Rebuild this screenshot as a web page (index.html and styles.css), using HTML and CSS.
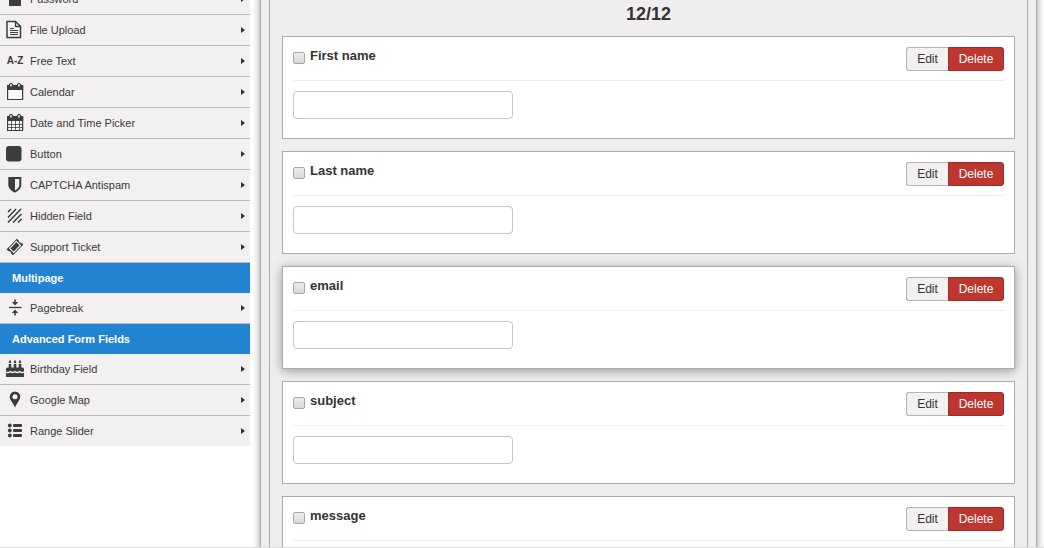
FILE: index.html
```
<!DOCTYPE html>
<html lang="en">
<head>
<meta charset="utf-8">
<title>Form builder</title>
<link rel="stylesheet" href="styles.css">
</head>
<body>
<div class="app">
  <nav class="sidebar" aria-label="Form fields">
    <ul class="field-list">
      <li><a class="field" href="#"><svg class="icon" viewBox="0 0 20 20"><path d="M4 8h12v8.500q0 .5-1 .5H5q-1 0-1-.5z" fill="#3d3d3d"/></svg><span>Password</span></a></li>
      <li><a class="field" href="#"><svg class="icon" viewBox="0 0 20 20"><path d="M2 1.500h8.500l5 5V17.500H2z" fill="#f8f7f7" stroke="#3d3d3d" stroke-width="1.500"/><path d="M10.500 1.500v5h5" fill="none" stroke="#3d3d3d" stroke-width="1.300"/><path d="M5 8.500h4M5 10.500h8M5 12.500h8M5 14.500h8" stroke="#3d3d3d"/></svg><span>File Upload</span></a></li>
      <li><a class="field" href="#"><span class="icon icon-text">A-Z</span><span>Free Text</span></a></li>
      <li><a class="field" href="#"><svg class="icon" viewBox="0 0 20 20"><path d="M2.600 4h15v13.500h-15z" fill="#fbfafa" stroke="#3d3d3d" stroke-width="1.200"/><path d="M2 3h16.200v5H2z" fill="#3d3d3d"/><path d="M4.500 5V2.500q1.500-2.500 3 0V5zM12.500 5V2.500q1.500-2.500 3 0V5z" fill="#d9d8d8" stroke="#3d3d3d" stroke-width="1.200"/></svg><span>Calendar</span></a></li>
      <li><a class="field" href="#"><svg class="icon" viewBox="0 0 20 20"><path d="M2.600 4h15v13.500h-15z" fill="#fbfafa" stroke="#3d3d3d" stroke-width="1.200"/><path d="M2 3h16.200v5H2z" fill="#3d3d3d"/><path d="M6.500 8v10M10.500 8v10M14.500 8v10M3 11.500h14M3 14.500h14" stroke="#3d3d3d" stroke-width=".8"/><path d="M4.500 5V2.500q1.500-2.500 3 0V5zM12.500 5V2.500q1.500-2.500 3 0V5z" fill="#d9d8d8" stroke="#3d3d3d" stroke-width="1.200"/></svg><span>Date and Time Picker</span></a></li>
      <li><a class="field" href="#"><svg class="icon" viewBox="0 0 20 20"><rect x="1" y="2" width="15.500" height="15.500" rx="3" fill="#3d3d3d"/></svg><span>Button</span></a></li>
      <li><a class="field" href="#"><svg class="icon" viewBox="0 0 20 20"><path d="M3.300 2h13v8q0 4.500-6.500 7.800Q3.300 14.500 3.300 10z" fill="#3d3d3d"/><path d="M10 4h4.300v6q0 3-4.300 5.400z" fill="#f2f0f1"/></svg><span>CAPTCHA Antispam</span></a></li>
      <li><a class="field" href="#"><svg class="icon" viewBox="0 0 20 20"><path d="M3 6l3-3M3 11.500L11 3M3 16.500L16 3M8 16.500l8.500-8.500M13 16.500l3.500-3.500" stroke="#3d3d3d" stroke-width="1.500"/></svg><span>Hidden Field</span></a></li>
      <li><a class="field" href="#"><svg class="icon" viewBox="0 0 20 20"><path d="M1.500 12.500L11.800 1.800l2 1.600q-.2 2.400 2.300 2.300l2.300 1.800L8 18.300l-2-1.700q.3-2.500-2.300-2.400z" fill="#3d3d3d"/><path d="M4.700 11.300l6.600-6.900 4.100 4-6.700 7z" fill="none" stroke="#f2f0f1" stroke-width="1.200"/></svg><span>Support Ticket</span></a></li>
    </ul>
    <h2 class="group">Multipage</h2>
    <ul class="field-list">
      <li><a class="field" href="#"><svg class="icon" viewBox="0 0 20 20"><path d="M4 9.500h12.500" stroke="#3d3d3d" stroke-width="1.300"/><path d="M9.200 1.500h1.600V4h2.400L10 7.500 6.800 4h2.400zM9.200 17.500h1.600V15h2.400L10 11.500 6.800 15h2.400z" fill="#3d3d3d"/></svg><span>Pagebreak</span></a></li>
    </ul>
    <h2 class="group">Advanced Form Fields</h2>
    <ul class="field-list">
      <li><a class="field" href="#"><svg class="icon" viewBox="0 0 20 20"><path d="M3.700 5h2.600v4H3.700zM8.700 5h2.600v4H8.700zM13.700 5h2.600v4h-2.600zM5 .5l1.400 3L5 4.500l-1.400-1zM10 .5l1.400 3-1.400 1-1.400-1zM15 .5l1.400 3-1.400 1-1.400-1zM2.500 8.500h15q1.500 0 1.500 1.500v2.300q-2 1.500-4.500-.5-2.300 2-4.500 0-2.300 2-4.500 0-2.500 2-4.500.5V10q0-1.500 1.500-1.500zM1 18v-4.200q2.500 1.200 4.500-.300 2.300 1.600 4.500 0 2.300 1.600 4.500 0 2.200 1.500 4.500.3V18z" fill="#3d3d3d"/></svg><span>Birthday Field</span></a></li>
      <li><a class="field" href="#"><svg class="icon" viewBox="0 0 20 20"><path d="M10 1.500a5.300 5.300 0 0 0-5.300 5.300c0 3.200 3.300 6.200 5.300 10.700 2-4.500 5.300-7.500 5.300-10.700A5.300 5.300 0 0 0 10 1.500zm0 2.700a2.500 2.500 0 1 1 0 5 2.500 2.500 0 0 1 0-5z" fill="#3d3d3d"/></svg><span>Google Map</span></a></li>
      <li><a class="field" href="#"><svg class="icon" viewBox="0 0 20 20"><g fill="#3d3d3d"><rect x="8" y="3" width="9" height="3" rx="1"/><rect x="8" y="8" width="9" height="3" rx="1"/><rect x="8" y="13" width="9" height="3" rx="1"/><circle cx="4.800" cy="4.500" r="1.900"/><circle cx="4.800" cy="9.500" r="1.900"/><circle cx="4.800" cy="14.500" r="1.900"/></g></svg><span>Range Slider</span></a></li>
    </ul>
  </nav>

  <main class="canvas">
    <div class="canvas-inner">
      <h1 class="counter">12/12</h1>
      <section class="card">
        <header class="card-head">
          <label class="pick"><input class="check" type="checkbox"><span>First name</span></label>
          <div class="actions"><button class="btn" type="button">Edit</button><button class="btn btn-danger" type="button">Delete</button></div>
        </header>
        <input class="text" type="text" aria-label="First name">
      </section>
      <section class="card">
        <header class="card-head">
          <label class="pick"><input class="check" type="checkbox"><span>Last name</span></label>
          <div class="actions"><button class="btn" type="button">Edit</button><button class="btn btn-danger" type="button">Delete</button></div>
        </header>
        <input class="text" type="text" aria-label="Last name">
      </section>
      <section class="card card-active">
        <header class="card-head">
          <label class="pick"><input class="check" type="checkbox"><span>email</span></label>
          <div class="actions"><button class="btn" type="button">Edit</button><button class="btn btn-danger" type="button">Delete</button></div>
        </header>
        <input class="text" type="text" aria-label="email">
      </section>
      <section class="card">
        <header class="card-head">
          <label class="pick"><input class="check" type="checkbox"><span>subject</span></label>
          <div class="actions"><button class="btn" type="button">Edit</button><button class="btn btn-danger" type="button">Delete</button></div>
        </header>
        <input class="text" type="text" aria-label="subject">
      </section>
      <section class="card">
        <header class="card-head">
          <label class="pick"><input class="check" type="checkbox"><span>message</span></label>
          <div class="actions"><button class="btn" type="button">Edit</button><button class="btn btn-danger" type="button">Delete</button></div>
        </header>
        <input class="text" type="text" aria-label="message">
      </section>
    </div>
  </main>
</div>
</body>
</html>
```
FILE: styles.css
```
* { box-sizing: border-box; }

body {
  margin: 0;
  background: #fff;
  color: #333;
  font-family: "Liberation Sans", Arial, sans-serif;
}

.app {
  display: flex;
  height: 100vh;
  overflow: hidden;
  border-bottom: 1px solid #dedede;
}

/* Sidebar, shown scrolled part of the way down */
.sidebar {
  flex: 0 0 250px;
  margin-top: -16px;
  font-size: 11px;
}

.field-list {
  margin: 0;
  padding: 0;
  list-style: none;
}

.field {
  display: flex;
  align-items: center;
  gap: 5px;
  height: 31px;
  padding: 0 5px;
  border-bottom: 1px solid #bab8b9;
  background: #f2f0f1;
  color: #3a3a3a;
  text-decoration: none;
}

.field-list:last-child li:last-child .field {
  height: 30px;
  border-bottom: 0;
}

.field::after {
  content: "";
  margin-left: auto;
  margin-bottom: 1px;
  border: 3px solid transparent;
  border-right: 0;
  border-left: 4px solid #2f3338;
}

.icon {
  width: 20px;
  height: 20px;
}

.icon-text {
  font-size: 10px;
  font-weight: bold;
  line-height: 20px;
  text-align: center;
}

.group {
  margin: 0;
  padding: 0 12px;
  background: #2383d3;
  color: #fff;
  font-size: 11px;
  line-height: 30px;
}

/* Form canvas */
.canvas {
  flex: 1;
  align-self: flex-start;
  margin: -12px 7px 0 10px;
  padding: 0 8px;
  border: 1px solid #adabac;
  background: #efedee;
  box-shadow: 0 0 8px rgba(0, 0, 0, 0.4);
}

.canvas-inner {
  padding: 13px 12px 12px;
  border: 1px solid #adabac;
  border-top: 0;
}

.counter {
  margin: 0 0 10px;
  font-size: 18px;
  line-height: 24px;
  text-align: center;
}

.card {
  margin-bottom: 12px;
  padding: 10px 10px 19px;
  border: 1px solid #adabac;
  background: #fff;
}

.card-active {
  box-shadow: 0 2px 10px rgba(0, 0, 0, 0.35);
}

.card-head {
  display: flex;
  align-items: flex-start;
  justify-content: space-between;
  height: 34px;
  margin-bottom: 10px;
  border-bottom: 1px solid #eee;
}

.pick {
  display: flex;
  gap: 5px;
  font-size: 13px;
  font-weight: bold;
  line-height: 18px;
}

.check {
  appearance: none;
  width: 12px;
  height: 12px;
  margin: 5px 0 0;
  border: 1px solid #a6a6a6;
  border-radius: 2px;
  background: linear-gradient(#ededed, #d8d8d8);
}

.check:checked { background: #2383d3; }

.actions { display: flex; }

.btn {
  width: 42px;
  height: 24px;
  padding: 0;
  border: 1px solid #b5b3b4;
  border-right: 0;
  border-radius: 3px 0 0 3px;
  background: #f2f0f1;
  color: #333;
  font: 12px/22px "Liberation Sans", Arial, sans-serif;
}

.btn-danger {
  width: 56px;
  border: 1px solid #9c2a26;
  border-radius: 0 3px 3px 0;
  background: #bd362f;
  color: #fff;
}

.text {
  display: block;
  width: 220px;
  height: 28px;
  padding: 4px 6px;
  border: 1px solid #c4c4c4;
  border-radius: 4px;
  background: #fff;
  font: 13px/18px "Liberation Sans", Arial, sans-serif;
}
```
